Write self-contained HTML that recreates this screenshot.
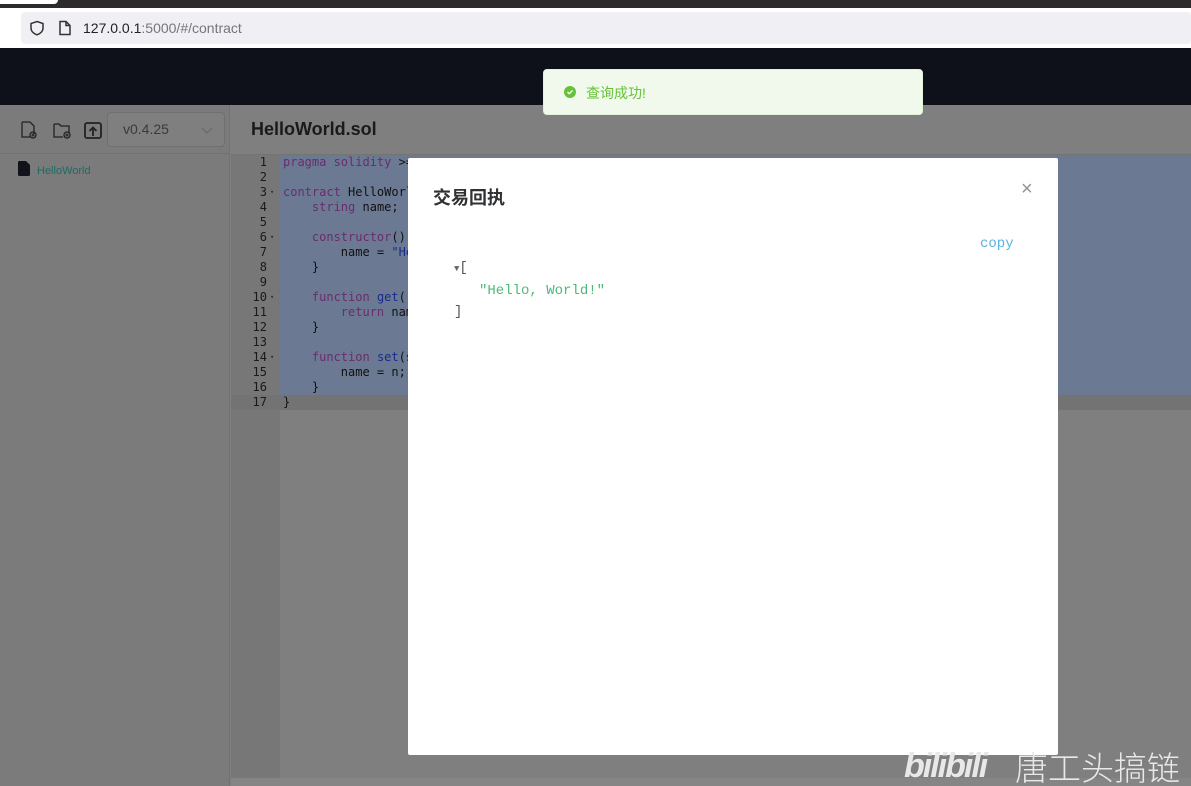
<!DOCTYPE html>
<html style="overflow:hidden;height:786px"><head><meta charset="utf-8"><style>
*{margin:0;padding:0;box-sizing:border-box}
body{width:1191px;height:786px;overflow:hidden;position:relative;background:#7f7f7f;font-family:"Liberation Sans","Noto Sans CJK SC",sans-serif}
.a{position:absolute}
.mono{font-family:"DejaVu Sans Mono","Liberation Mono",monospace;font-size:12px}
.code div{height:15px;line-height:15px;white-space:pre}
.kw{color:#6a2c6e}
</style></head><body>
<div class="a" style="left:0;top:0;width:1191px;height:8px;background:#2d2b2b"></div>
<div class="a" style="left:0;top:0;width:58px;height:4px;background:#fff;border-radius:0 0 4px 0"></div>
<div class="a" style="left:0;top:8px;width:1191px;height:40px;background:#fff"></div>
<div class="a" style="left:21px;top:12px;width:1170px;height:32px;background:#f0f0f4;border-radius:4px"></div>
<svg class="a" style="left:29px;top:20px" width="16" height="16" viewBox="0 0 16 16"><path d="M8 1.5 L14 3.5 V8 C14 11.5 11 13.8 8 14.8 C5 13.8 2 11.5 2 8 V3.5 Z" fill="none" stroke="#333" stroke-width="1.5"/></svg>
<svg class="a" style="left:58px;top:20px" width="14" height="16" viewBox="0 0 14 16"><path d="M2 1.5 H8 L12 5.5 V14.5 H2 Z M8 1.5 V5.5 H12" fill="none" stroke="#333" stroke-width="1.5"/></svg>
<div class="a" style="left:83px;top:20px;font-size:14px;color:#222">127.0.0.1<span style="color:#777">:5000/#/contract</span></div>
<div class="a" style="left:0;top:48px;width:1191px;height:57px;background:#0e111a"></div>
<div class="a" style="left:0;top:105px;width:230px;height:681px;background:#7b7b7b;border-right:1px solid #727272"></div>
<div class="a" style="left:0;top:153px;width:230px;height:1px;background:#727272"></div>
<svg class="a" style="left:19px;top:120px" width="20" height="20" viewBox="0 0 20 20" fill="none" stroke="#222" stroke-width="1.3"><path d="M3 2h8l4 4v8M3 2v15h8"/><circle cx="14" cy="15" r="3"/><path d="M14 13.5v3M12.5 15h3"/></svg>
<svg class="a" style="left:52px;top:120px" width="20" height="20" viewBox="0 0 20 20" fill="none" stroke="#222" stroke-width="1.3"><path d="M2 4h5l2 2h8v7M2 4v13h9"/><circle cx="15" cy="15" r="3"/><path d="M15 13.5v3M13.5 15h3"/></svg>
<svg class="a" style="left:83px;top:120px" width="20" height="20" viewBox="0 0 20 20" fill="none" stroke="#222" stroke-width="1.8"><rect x="2" y="3" width="16" height="15" rx="2"/><path d="M10 16V8M6.5 11L10 7.5 13.5 11"/></svg>
<div class="a" style="left:107px;top:112px;width:118px;height:35px;border:1px solid #707070;border-radius:4px;background:#7f7f7f;color:#3a3a3a;font-size:14px;line-height:33px;padding-left:15px">v0.4.25</div>
<svg class="a" style="left:201px;top:127px" width="12" height="7" viewBox="0 0 12 7"><path d="M1 1l5 5 5-5" stroke="#666" fill="none"/></svg>
<svg class="a" style="left:18px;top:161px" width="12" height="15" viewBox="0 0 12 15"><path d="M0 1.5Q0 0 1.5 0H8L12 4V13.5Q12 15 10.5 15H1.5Q0 15 0 13.5Z" fill="#12131a"/></svg>
<div class="a" style="left:37px;top:165px;font-size:11px;color:#1c6b65">HelloWorld</div>
<div class="a" style="left:231px;top:105px;width:960px;height:50px;background:#7f7f7f;border-bottom:1px solid #747474"></div>
<div class="a" style="left:251px;top:119px;font-size:18px;font-weight:bold;color:#1a1a1a">HelloWorld.sol</div>
<div class="a" style="left:231px;top:155px;width:49px;height:631px;background:#777"></div>
<div class="a" style="left:280px;top:155px;width:911px;height:240px;background:#6b7a92"></div>
<div class="a" style="left:231px;top:395px;width:960px;height:15px;background:#737373"></div>
<div class="a" style="left:231px;top:778px;width:960px;height:8px;background:#858585"></div>
<div class="a mono code" style="left:231px;top:155px;width:36px;text-align:right;color:#1a1a1a">
<div>1</div><div>2</div><div>3</div><div>4</div><div>5</div><div>6</div><div>7</div><div>8</div><div>9</div><div>10</div><div>11</div><div>12</div><div>13</div><div>14</div><div>15</div><div>16</div><div>17</div></div>
<div class="a mono" style="left:270px;top:155px;font-size:7px;color:#333;line-height:15px"><div style="margin-top:30px">▾</div><div style="margin-top:30px">▾</div><div style="margin-top:45px">▾</div><div style="margin-top:45px">▾</div></div>
<div class="a mono code" style="left:283px;top:155px;color:#111">
<div><span class="kw">pragma solidity</span> &gt;=</div><div> </div><div><span class="kw">contract</span> HelloWorl</div><div>    <span class="kw">string</span> name;</div><div> </div><div>    <span class="kw">constructor</span>()</div><div>        name = <span style="color:#1a2a8a">"He</span></div><div>    }</div><div> </div><div>    <span class="kw">function</span> <span style="color:#1a2a8a">get</span>()</div><div>        <span class="kw">return</span> nam</div><div>    }</div><div> </div><div>    <span class="kw">function</span> <span style="color:#1a2a8a">set</span>(s</div><div>        name = n;</div><div>    }</div><div>}</div></div>
<div class="a" style="left:408px;top:158px;width:650px;height:597px;background:#fff;border-radius:2px"></div>
<div class="a" style="left:433px;top:184px;font-size:18px;font-weight:bold;color:#303133">交易回执</div>
<div class="a" style="left:1021px;top:178px;font-size:20px;color:#909399;font-weight:300">×</div>
<div class="a" style="left:980px;top:236px;font-family:'Liberation Mono',monospace;font-size:14px;color:#5ab3e0">copy</div>
<div class="a" style="left:454px;top:258px;font-family:'Liberation Mono',monospace;font-size:14px;color:#555;line-height:21.5px">
<div><span style="font-size:9px;color:#666">▼</span>[</div>
<div style="padding-left:25px;color:#4bb97a">"Hello, World!"</div>
<div>]</div></div>
<div class="a" style="left:543px;top:69px;width:380px;height:46px;background:#f0f9eb;border:1px solid #e1f3d8;border-radius:4px"></div>
<svg class="a" style="left:564px;top:86px" width="12" height="12" viewBox="0 0 12 12"><circle cx="6" cy="6" r="6" fill="#67c23a"/><path d="M3.5 6l1.7 1.7L8.5 4.5" stroke="#fff" stroke-width="1.3" fill="none"/></svg>
<div class="a" style="left:586px;top:83px;font-size:14px;color:#67c23a">查询成功!</div>
<div class="a" style="left:904px;top:746px;font-size:34px;color:#e8e8e8;font-weight:bold;letter-spacing:-2px;font-style:italic;line-height:40px">bilibili</div>
<div class="a" style="left:1015px;top:746px;font-size:33px;line-height:40px;color:#e8e8e8;font-family:'Noto Sans CJK SC',sans-serif;font-weight:300">唐工头搞链</div>
</body></html>
